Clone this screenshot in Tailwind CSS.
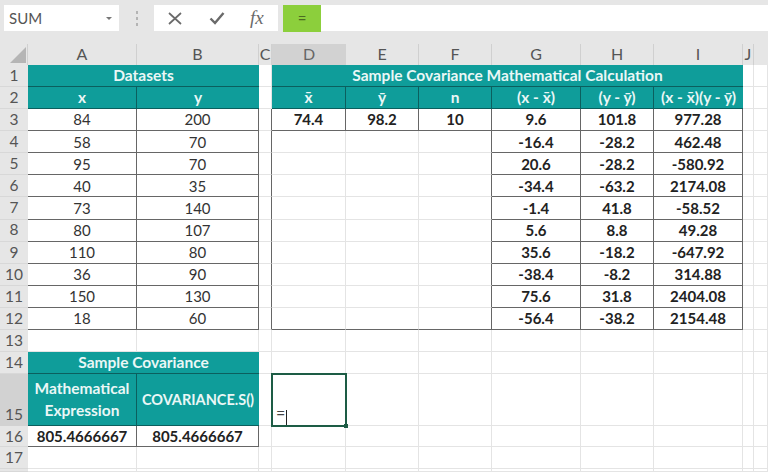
<!DOCTYPE html>
<html lang="en">
<head>
  <meta charset="UTF-8" />
  <title>Sample Covariance</title>
  <script src="https://cdn.jsdelivr.net/npm/@tailwindcss/browser@4"></script>
</head>
<body class="h-[472px] w-[768px] overflow-hidden bg-white font-['Lato','Liberation_Sans',sans-serif] text-[15px]">

  <!-- Formula bar -->
  <div class="h-[44px] bg-[#e6e6e6] pt-[5px] flex items-start">
    <div class="ml-[4px] w-[115px] h-[26px] bg-white flex items-center justify-between pl-[5px] pr-[7px] text-[#555]">
      <span>SUM</span>
      <span class="w-0 h-0 border-x-[3px] border-x-transparent border-t-[3px] border-t-[#777]"></span>
    </div>
    <div class="w-[35px] h-[26px] flex flex-col items-center justify-center gap-[3px]">
      <span class="w-[2px] h-[3px] bg-[#b4b4b4]"></span>
      <span class="w-[2px] h-[3px] bg-[#b4b4b4]"></span>
      <span class="w-[2px] h-[3px] bg-[#b4b4b4]"></span>
    </div>
    <div class="w-[124px] h-[26px] bg-white flex items-center text-[#6a6a6a]">
      <svg class="ml-[14px]" width="14" height="13" viewBox="0 0 14 13" fill="none" stroke="#6a6a6a" stroke-width="1.7"><path d="M1 1 13 12M13 1 1 12" /></svg>
      <svg class="ml-[27px]" width="16" height="14" viewBox="0 0 16 14" fill="none" stroke="#6a6a6a" stroke-width="2.4"><path d="M1.5 7.5 6 12 14.5 2" /></svg>
      <span class="ml-[25px] font-['Liberation_Serif',serif] italic text-[19px]">fx</span>
    </div>
    <div class="ml-[5px] w-[38px] h-[27px] bg-[#8ccf3c] flex items-center justify-center text-[#4b6b22]">=</div>
    <div class="flex-1 h-[26px] bg-white"></div>
  </div>

  <!-- Sheet -->
  <div id="sheet" class="grid h-[428px] grid-cols-[28px_109px_122px_13px_74px_73px_73px_89px_73px_89px_11px_1fr] grid-rows-[21px_repeat(12,22.08px)_22px_22px_52px_21.5px_22px_1fr]"></div>

  <script>
    const sheet = document.getElementById('sheet');

    const colHead = 'flex items-center justify-center bg-[#e6e6e6] border-r border-[#d0d0d0] text-[#555] text-[16px] pb-[1px]';
    const colHeadOn = 'flex items-center justify-center bg-[#d2d2d2] text-[#666] text-[16px] pb-[1px]';
    const rowHead = 'flex items-center justify-center bg-[#e6e6e6] border-b border-[#d8d8d8] text-[#555] text-[15.5px]';
    const rowHeadOn = 'flex items-end justify-center bg-[#d2d2d2] text-[#555] text-[15.5px]';
    const grid = 'border-r border-b border-[#e4e4e4]';
    const gridLastRow = 'border-r border-r-[#e4e4e4] border-b border-b-[#666]';
    const gridEdge = 'border-b border-b-[#e4e4e4] border-r border-r-[#666]';
    const box = 'flex items-center justify-center border-r border-b border-[#666] text-[#333]';
    const boxBold = 'flex items-center justify-center border-r border-b border-[#666] text-[#222] font-bold';
    const teal = 'flex items-center justify-center bg-[#0f9d9a] text-[#eaf7f6] text-[15.5px] font-bold border-r border-b border-[#0b5f5e]';
    const tealNoRight = 'flex items-center justify-center bg-[#0f9d9a] text-[#eaf7f6] text-[15.5px] font-bold border-b border-[#0b5f5e]';
    const tealSmall = 'flex items-center justify-center bg-[#0f9d9a] text-[#eaf7f6] text-[14.5px] font-bold border-b border-[#0b5f5e]';
    const tealTitle2 = 'col-span-2 flex items-center justify-center bg-[#0f9d9a] text-[#eaf7f6] text-[15.5px] font-bold border-b border-[#0b5f5e]';
    const tealTitle6 = 'col-span-6 flex items-center justify-center bg-[#0f9d9a] text-[#eaf7f6] text-[15.5px] font-bold border-b border-[#0b5f5e]';

    function add(cls, html) {
      const el = document.createElement('div');
      el.className = cls;
      if (html) el.innerHTML = html;
      sheet.appendChild(el);
      return el;
    }

    // column letters
    add('flex items-end bg-[#e6e6e6] border-r border-[#d0d0d0]', '<svg class="ml-[10px] mb-[2px]" width="16" height="16" viewBox="0 0 16 16"><path d="M16 0V16H0Z" fill="#b5b5b5" /></svg>');
    ['A', 'B', 'C', 'D', 'E', 'F', 'G', 'H', 'I', 'J'].forEach(c => add(c === 'D' ? colHeadOn : colHead, c));
    add('bg-[#e6e6e6]');

    // rows 1 and 2
    add(rowHead, '1');
    add(tealTitle2, 'Datasets');
    add(grid);
    add(tealTitle6, 'Sample Covariance Mathematical Calculation');
    add(grid); add(grid);

    add(rowHead, '2');
    add(teal, 'x'); add(tealNoRight, 'y');
    add(grid);
    ['x̄', 'ȳ', 'n', '(x - x̄)', '(y - ȳ)'].forEach(t => add(teal, t));
    add(tealNoRight, '(x - x̄)(y - ȳ)');
    add(grid); add(grid);

    // rows 3 to 12
    const data = [
      [84, 200, '9.6', '101.8', '977.28'],
      [58, 70, '-16.4', '-28.2', '462.48'],
      [95, 70, '20.6', '-28.2', '-580.92'],
      [40, 35, '-34.4', '-63.2', '2174.08'],
      [73, 140, '-1.4', '41.8', '-58.52'],
      [80, 107, '5.6', '8.8', '49.28'],
      [110, 80, '35.6', '-18.2', '-647.92'],
      [36, 90, '-38.4', '-8.2', '314.88'],
      [150, 130, '75.6', '31.8', '2404.08'],
      [18, 60, '-56.4', '-38.2', '2154.48'],
    ];
    data.forEach((r, i) => {
      add(rowHead, String(i + 3));
      add(box, r[0]); add(box, r[1]);
      add(gridEdge);
      if (i === 0) {
        add(boxBold, '74.4'); add(boxBold, '98.2'); add(boxBold, '10');
      } else if (i === 9) {
        add(gridLastRow); add(gridLastRow); add(box);
      } else {
        add(grid); add(grid); add(gridEdge);
      }
      add(boxBold, r[2]); add(boxBold, r[3]); add(boxBold, r[4]);
      add(grid); add(grid);
    });

    function blanks(n) {
      for (let i = 0; i < n; i++) add(grid);
    }

    // row 13
    add(rowHead, '13');
    blanks(11);

    // row 14
    add(rowHead, '14');
    add(tealTitle2, 'Sample Covariance');
    blanks(9);

    // row 15
    add(rowHeadOn, '15');
    add(teal + ' text-center leading-[22px]', 'Mathematical<br>Expression');
    add(tealSmall, 'COVARIANCE.S()');
    add(grid);
    add('relative flex items-end pl-[4px] pb-[1px] text-[16px] text-[#444]', '=<span class="w-px h-[15px] bg-[#222] ml-[1px]"></span><div class="absolute -inset-px border-2 border-[#1d5c45]"></div><div class="absolute -right-[2px] -bottom-[2px] w-[4px] h-[4px] bg-[#1d5c45]"></div>');
    blanks(7);

    // row 16
    add(rowHead, '16');
    add(boxBold, '805.4666667'); add(boxBold, '805.4666667');
    blanks(9);

    // row 17 and the cut-off row under it
    add(rowHead, '17');
    blanks(11);
    add(rowHead);
    blanks(11);
  </script>
</body>
</html>
